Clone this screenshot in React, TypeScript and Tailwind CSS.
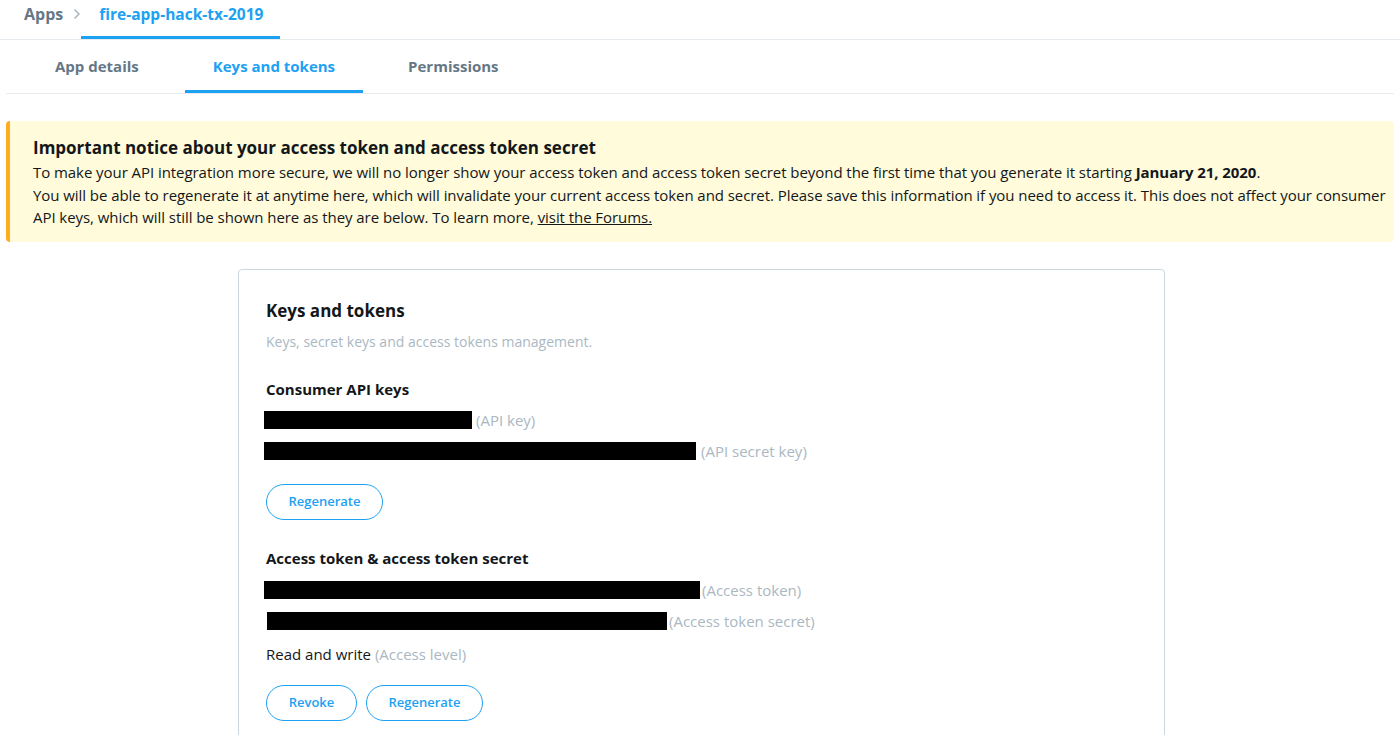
const font = { fontFamily: '"Open Sans", "Noto Sans", Arial, sans-serif' };

const Redacted = ({ w, ml = 0 }: { w: number; ml?: number }) => (
  <span className="inline-block h-[18px] bg-black align-middle" style={{ width: w, marginLeft: ml }} />
);

const PillButton = ({ label, w }: { label: string; w: number }) => (
  <button
    className="h-[36px] rounded-full border border-[#1da1f2] text-[13px] font-semibold text-[#1da1f2] hover:bg-[#e8f5fd]"
    style={{ width: w }}
  >
    {label}
  </button>
);

export default function App() {
  return (
    <div className="min-h-screen bg-white text-[#14171a]" style={font}>
      {/* breadcrumb */}
      <div className="flex h-[40px] items-stretch border-b border-[#e6ecf0]">
        <div className="pl-[24px] pr-[10px] pt-[3px] text-[16px] font-bold leading-[22px] text-[#657786]">Apps</div>
        <div className="flex h-[28px] items-center text-[#aab8c2]">
          <svg width="8" height="14" viewBox="0 0 8 14" fill="none" stroke="currentColor" strokeWidth="1.5">
            <path d="M1.5 2.5l4.5 4.5-4.5 4.5" />
          </svg>
        </div>
        <div className="border-b-[3px] border-[#1da1f2] pl-[18px] pr-[17px] pt-[3px] text-[15.5px] font-bold leading-[22px] text-[#1da1f2]">
          fire-app-hack-tx-2019
        </div>
      </div>

      {/* tabs */}
      <div className="mx-[6px] flex h-[54px] items-stretch border-b border-[#e6ecf0]">
        <div className="flex items-center pl-[49px] pr-[46px] text-[15px] font-bold text-[#657786]">App details</div>
        <div className="flex items-center border-b-[3px] border-[#1da1f2] px-[28px] pt-[3px] text-[15px] font-bold text-[#1da1f2]">
          Keys and tokens
        </div>
        <div className="ml-[45px] flex items-center text-[15px] font-bold text-[#657786]">Permissions</div>
      </div>

      {/* notice */}
      <div className="mx-[6px] mt-[27px] rounded-[4px] border-l-[4px] border-[#ffad1f] bg-[#fffbdb] pb-[13px] pl-[23px] pr-[6px] pt-[15px]">
        <div className="text-[17px] font-bold leading-[24px]">Important notice about your access token and access token secret</div>
        <div className="mt-[1px] text-[15px] leading-[22.5px] tracking-[-0.06px] text-[#14171a]">
          <p>
            To make your API integration more secure, we will no longer show your access token and access token secret beyond
            the first time that you generate it starting <b>January 21, 2020</b>.
          </p>
          <p>
            <span className="whitespace-nowrap">
              You will be able to regenerate it at anytime here, which will invalidate your current access token and secret.
              Please save this information if you need to access it. This does not affect your consumer
            </span>
            <br />
            API keys, which will still be shown here as they are below. To learn more,{' '}
            <a href="#" className="underline">
              visit the Forums.
            </a>
          </p>
        </div>
      </div>

      {/* card */}
      <div className="mx-[238px] mt-[27px] w-[927px] rounded-[4px] border border-[#ccd6dd] px-[27px] pb-[20px] pt-[28px]">
        <h2 className="text-[17px] font-bold leading-[26px]">Keys and tokens</h2>
        <p className="mt-[7px] text-[14px] text-[#aab8c2]">Keys, secret keys and access tokens management.</p>

        <h3 className="mt-[26px] text-[15px] font-bold leading-[22px]">Consumer API keys</h3>
        <div className="mt-[9px] flex items-center text-[15px] leading-[22px] text-[#aab8c2]">
          <Redacted w={208} ml={-2} />
          <span className="ml-[4px]">(API key)</span>
        </div>
        <div className="mt-[9px] flex items-center text-[15px] leading-[22px] text-[#aab8c2]">
          <Redacted w={432} ml={-2} />
          <span className="ml-[5px]">(API secret key)</span>
        </div>
        <div className="mt-[22px]">
          <PillButton label="Regenerate" w={117} />
        </div>

        <h3 className="mt-[27px] text-[15px] font-bold leading-[22px]">Access token &amp; access token secret</h3>
        <div className="mt-[10px] flex items-center text-[15px] leading-[22px] text-[#aab8c2]">
          <Redacted w={436} ml={-2} />
          <span className="ml-[2px]">(Access token)</span>
        </div>
        <div className="mt-[9px] flex items-center text-[15px] leading-[22px] text-[#aab8c2]">
          <Redacted w={400} ml={1} />
          <span className="ml-[2px]">(Access token secret)</span>
        </div>
        <div className="mt-[11px] text-[15px] leading-[22px]">
          Read and write <span className="text-[#aab8c2]">(Access level)</span>
        </div>
        <div className="mt-[20px] flex gap-[9px]">
          <PillButton label="Revoke" w={91} />
          <PillButton label="Regenerate" w={117} />
        </div>
      </div>
    </div>
  );
}
